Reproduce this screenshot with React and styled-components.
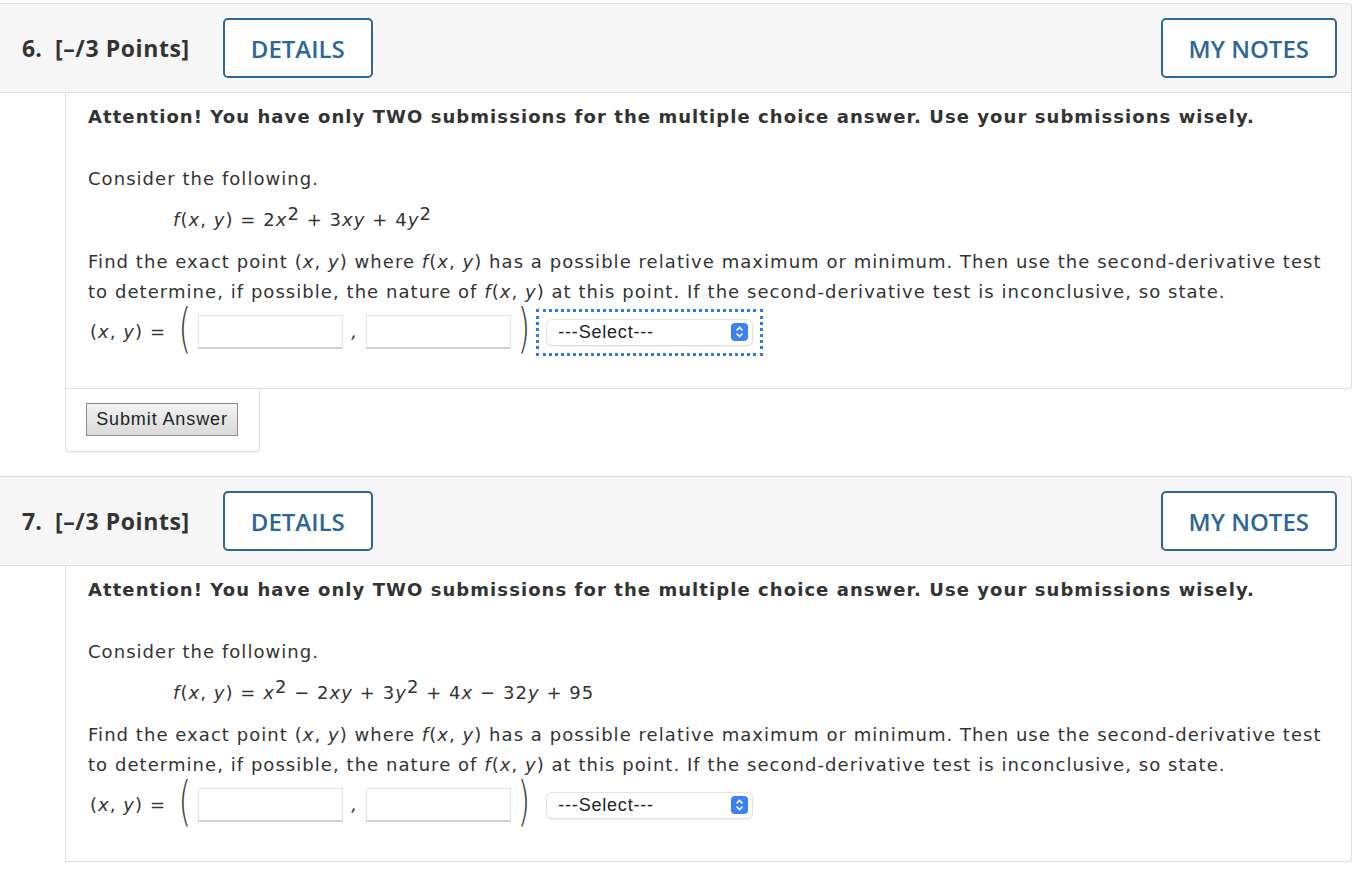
import React from "react";
import styled, { createGlobalStyle } from "styled-components";

const Global = createGlobalStyle`
  html, body { margin: 0; padding: 0; background: #fff; }
  body { font-family: "DejaVu Sans", Verdana, sans-serif; color: #333; }
`;

const Page = styled.div`
  width: 1352px;
  padding-top: 3px;
`;

const Question = styled.section`
  margin-bottom: 24px;
`;

const Header = styled.div`
  height: 88px;
  background: #f6f6f6;
  border: 1px solid #dedede;
  border-left: none;
  border-top-right-radius: 3px;
  display: flex;
  align-items: center;
  padding: 0 14px 0 22px;
  font-family: "Open Sans", sans-serif;
`;

const Num = styled.span`
  font-size: 23px;
  font-weight: 700;
  color: #333;
  width: 33px;
`;

const Points = styled.span`
  font-size: 23px;
  font-weight: 700;
  letter-spacing: 0.6px;
  color: #333;
`;

const OutlineButton = styled.button`
  height: 60px;
  padding: 0 26px;
  border: 2px solid #2d6799;
  border-radius: 5px;
  background: #fff;
  color: #2d6799;
  font-family: "Open Sans", sans-serif;
  font-size: 24px;
  font-weight: 600;
  margin-left: ${(p) => p.$ml || 0}px;
  cursor: pointer;
`;

const Spacer = styled.div`
  flex: 1;
`;

const Body = styled.div`
  margin-left: 65px;
  border: 1px solid #dedede;
  border-top: none;
  border-bottom-right-radius: 4px;
  padding: 9px 22px 33px 22px;
  font-size: 18px;
  line-height: 30px;
  letter-spacing: 1.05px;
  color: #333;
`;

const Bold = styled.p`
  margin: 0 0 32px;
  font-weight: 700;
  letter-spacing: 1.07px;
`;

const Para = styled.p`
  margin: 0 0 ${(p) => p.$mb || 0}px;
`;

const Formula = styled.p`
  margin: 0 0 12px 85px;
`;

const I = styled.i`
  font-style: italic;
`;

const Sup = styled.sup`
  font-size: 18px;
  vertical-align: 0;
  position: relative;
  top: -6px;
`;

const AnswerRow = styled.div`
  display: flex;
  align-items: center;
  height: 46px;
  margin-top: 2px;
`;

const Label = styled.span`
  margin-left: 2px;
  margin-right: 8px;
`;

const Paren = styled.span`
  font-family: "DejaVu Sans", sans-serif;
  font-size: 54px;
  font-weight: 200;
  line-height: 46px;
  color: #444;
  display: inline-block;
  transform: scaleX(0.6);
  margin: -6px ${(p) => p.$mr || 0}px 0 ${(p) => p.$ml || 0}px;
`;

const Input = styled.input`
  width: 145px;
  height: 34px;
  box-sizing: border-box;
  border: 1px solid #e3e3e3;
  border-bottom: 2px solid #cfcfcf;
  background: #fff;
  font-size: 16px;
`;

const Comma = styled.span`
  width: 23px;
  text-align: center;
  font-style: italic;
`;

const SelectWrap = styled.div`
  margin-left: ${(p) => (p.$focus ? 1 : 12)}px;
  padding: ${(p) => (p.$focus ? "8px 8px" : "0")};
  border: ${(p) => (p.$focus ? "3px dotted #2f7de1" : "none")};
  display: flex;
`;

const SelectBox = styled.div`
  width: 205px;
  height: 25px;
  box-sizing: border-box;
  background: #fff;
  border-radius: 5px;
  box-shadow: 0 0 0 1px #e2e2e2, 0 1px 2px rgba(0, 0, 0, 0.2);
  display: flex;
  align-items: center;
  justify-content: space-between;
  padding: 0 4px 0 11px;
  font-family: "Liberation Sans", Arial, sans-serif;
  font-size: 18px;
  letter-spacing: 0.8px;
  color: #222;
`;

const SelectIcon = styled.span`
  width: 17px;
  height: 18px;
  border-radius: 4px;
  background: #3b82f6;
  display: flex;
  align-items: center;
  justify-content: center;
`;

const SubmitArea = styled.div`
  margin-left: 65px;
  width: 195px;
  box-sizing: border-box;
  height: 63px;
  border: 1px solid #dedede;
  border-top: none;
  border-radius: 0 0 4px 4px;
  display: flex;
  align-items: center;
  padding-left: 20px;
  padding-bottom: 1px;
  box-shadow: 0 1px 1px rgba(0, 0, 0, 0.05);
`;

const SubmitButton = styled.button`
  height: 33px;
  width: 152px;
  border: 1px solid #8a8a8a;
  background: linear-gradient(#f2f2f2, #dadada);
  font-family: "Liberation Sans", Arial, sans-serif;
  font-size: 18px;
  letter-spacing: 0.9px;
  color: #222;
  padding: 0;
`;

const Chevrons = () => (
  <svg width="9" height="12" viewBox="0 0 9 12">
    <path d="M1.5 4.5 L4.5 1.5 L7.5 4.5" stroke="#fff" strokeWidth="1.6" fill="none" />
    <path d="M1.5 7.5 L4.5 10.5 L7.5 7.5" stroke="#fff" strokeWidth="1.6" fill="none" />
  </svg>
);

function QuestionBlock({ n, formula, focus, submit }) {
  return (
    <Question>
      <Header>
        <Num>{n}.</Num>
        <Points>[–/3 Points]</Points>
        <OutlineButton $ml={33}>DETAILS</OutlineButton>
        <Spacer />
        <OutlineButton>MY NOTES</OutlineButton>
      </Header>
      <Body>
        <Bold>
          Attention! You have only TWO submissions for the multiple choice answer. Use your
          submissions wisely.
        </Bold>
        <Para $mb={11}>Consider the following.</Para>
        <Formula>{formula}</Formula>
        <Para>
          Find the exact point (<I>x</I>, <I>y</I>) where <I>f</I>(<I>x</I>, <I>y</I>) has a
          possible relative maximum or minimum. Then use the second-derivative test to determine,
          if possible, the nature of <I>f</I>(<I>x</I>, <I>y</I>) at this point. If the
          second-derivative test is inconclusive, so state.
        </Para>
        <AnswerRow>
          <Label>
            (<I>x</I>, <I>y</I>) =
          </Label>
          <Paren $mr={2}>(</Paren>
          <Input />
          <Comma>,</Comma>
          <Input />
          <Paren $ml={2}>)</Paren>
          <SelectWrap $focus={focus}>
            <SelectBox>
              <span>---Select---</span>
              <SelectIcon>
                <Chevrons />
              </SelectIcon>
            </SelectBox>
          </SelectWrap>
        </AnswerRow>
      </Body>
      {submit && (
        <SubmitArea>
          <SubmitButton>Submit Answer</SubmitButton>
        </SubmitArea>
      )}
    </Question>
  );
}

export default function App() {
  return (
    <>
      <Global />
      <Page>
        <QuestionBlock
          n={6}
          focus
          submit
          formula={
            <>
              <I>f</I>(<I>x</I>, <I>y</I>) = 2<I>x</I>
              <Sup>2</Sup> + 3<I>xy</I> + 4<I>y</I>
              <Sup>2</Sup>
            </>
          }
        />
        <QuestionBlock
          n={7}
          formula={
            <>
              <I>f</I>(<I>x</I>, <I>y</I>) = <I>x</I>
              <Sup>2</Sup> − 2<I>xy</I> + 3<I>y</I>
              <Sup>2</Sup> + 4<I>x</I> − 32<I>y</I> + 95
            </>
          }
        />
      </Page>
    </>
  );
}
